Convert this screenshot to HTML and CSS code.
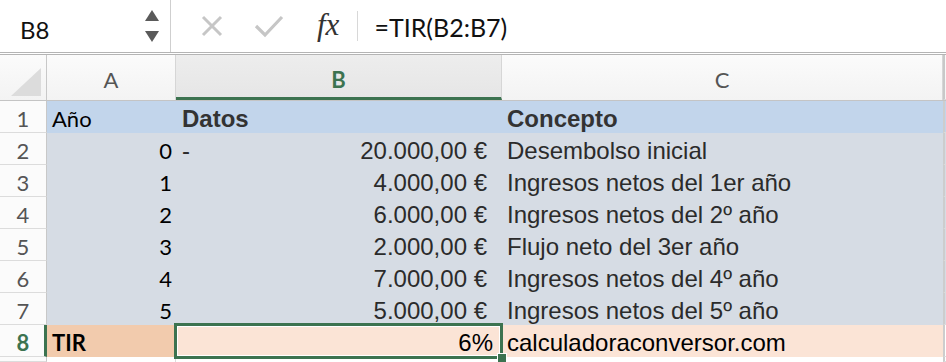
FILE: index.html
```html
<!DOCTYPE html>
<html lang="es">
<head>
    <meta charset="UTF-8">
    <title>TIR - Hoja de cálculo</title>
    <link rel="stylesheet" href="styles.css">
</head>
<body>
    <div class="formula-bar">
        <div class="name-box">
            <span class="cell-ref">B8</span>
            <div class="spinner">
                <span class="arrow up"></span>
                <span class="arrow down"></span>
            </div>
        </div>
        <div class="tools">
            <svg class="icon" width="24" height="24" viewBox="0 0 24 24">
                <path d="M3 3 L21 21 M21 3 L3 21" stroke="#c6c6c6" stroke-width="3" fill="none"/>
            </svg>
            <svg class="icon" width="30" height="24" viewBox="0 0 30 24">
                <path d="M2 12 L11 21 L28 3" stroke="#c6c6c6" stroke-width="3.2" fill="none"/>
            </svg>
            <span class="fx">fx</span>
            <span class="divider"></span>
        </div>
        <div class="formula">=TIR(B2:B7)</div>
    </div>

    <div class="sheet">
        <div class="row head">
            <div class="corner"><span class="tri"></span></div>
            <div class="col-head">A</div>
            <div class="col-head active">B</div>
            <div class="col-head">C</div>
            <div class="edge"></div>
        </div>

        <div class="row title">
            <div class="num">1</div>
            <div class="a">Año</div>
            <div class="b bold">Datos</div>
            <div class="c bold">Concepto</div>
            <div class="edge"></div>
        </div>
        <div class="row data">
            <div class="num">2</div>
            <div class="a right">0</div>
            <div class="b money"><span>-</span><span>20.000,00 €</span></div>
            <div class="c">Desembolso inicial</div>
            <div class="edge"></div>
        </div>
        <div class="row data">
            <div class="num">3</div>
            <div class="a right">1</div>
            <div class="b money"><span></span><span>4.000,00 €</span></div>
            <div class="c">Ingresos netos del 1er año</div>
            <div class="edge"></div>
        </div>
        <div class="row data">
            <div class="num">4</div>
            <div class="a right">2</div>
            <div class="b money"><span></span><span>6.000,00 €</span></div>
            <div class="c">Ingresos netos del 2º año</div>
            <div class="edge"></div>
        </div>
        <div class="row data">
            <div class="num">5</div>
            <div class="a right">3</div>
            <div class="b money"><span></span><span>2.000,00 €</span></div>
            <div class="c">Flujo neto del 3er año</div>
            <div class="edge"></div>
        </div>
        <div class="row data">
            <div class="num">6</div>
            <div class="a right">4</div>
            <div class="b money"><span></span><span>7.000,00 €</span></div>
            <div class="c">Ingresos netos del 4º año</div>
            <div class="edge"></div>
        </div>
        <div class="row data">
            <div class="num">7</div>
            <div class="a right">5</div>
            <div class="b money"><span></span><span>5.000,00 €</span></div>
            <div class="c">Ingresos netos del 5º año</div>
            <div class="edge"></div>
        </div>
        <div class="row result">
            <div class="num active">8</div>
            <div class="a tir">TIR</div>
            <div class="b selected">6%</div>
            <div class="c">calculadoraconversor.com</div>
            <div class="edge"></div>
        </div>
        <div class="row empty">
            <div class="num"></div>
            <div class="a"></div>
            <div class="b"></div>
            <div class="c"></div>
            <div class="edge"></div>
        </div>
    </div>
</body>
</html>
```

FILE: styles.css
```css
* {
    margin: 0;
    padding: 0;
    box-sizing: border-box;
}
body {
    width: 946px;
    height: 362px;
    overflow: hidden;
    background: #fff;
    font-family: 'Liberation Sans', Arial, sans-serif;
    color: #222;
}

/* formula bar */
.formula-bar {
    display: flex;
    align-items: center;
    height: 55px;
    border-bottom: 3px double #b4b4b4;
    background: #fff;
}
.name-box {
    width: 171px;
    height: 52px;
    border-right: 1px solid #cfcfcf;
    display: flex;
    align-items: center;
    justify-content: space-between;
    padding: 0 11px 0 20px;
}
.cell-ref {
    font-family: Lato, 'Open Sans', sans-serif;
    font-size: 24px;
    color: #111;
    padding-top: 6px;
}
.spinner {
    display: flex;
    flex-direction: column;
    gap: 10px;
}
.arrow {
    width: 0;
    height: 0;
    border-left: 7px solid transparent;
    border-right: 7px solid transparent;
}
.arrow.up {
    border-bottom: 11px solid #5a5a5a;
}
.arrow.down {
    border-top: 11px solid #5a5a5a;
}
.tools {
    display: flex;
    align-items: center;
    height: 52px;
    padding-left: 29px;
}
.tools .icon {
    margin-right: 30px;
}
.tools .icon + .icon {
    margin-right: 33px;
}
.fx {
    font-family: 'Liberation Serif', 'DejaVu Serif', serif;
    font-style: italic;
    font-size: 31px;
    color: #333;
    margin-top: -2px;
}
.divider {
    width: 1px;
    height: 30px;
    background: #d8d8d8;
    margin-left: 18px;
}
.formula {
    font-family: Lato, 'Open Sans', sans-serif;
    font-size: 25px;
    color: #111;
    padding-left: 16px;
    padding-top: 2px;
}

/* sheet grid */
.sheet {
    display: flex;
    flex-direction: column;
}
.row {
    display: grid;
    grid-template-columns: 47px 129px 326px 441px 1fr;
    height: 32px;
}
.row > div {
    display: flex;
    align-items: center;
    white-space: nowrap;
}
.row.head {
    height: 46px;
    background: linear-gradient(#fbfbfb, #f3f3f3);
    border-bottom: 1px solid #c4c4c4;
}
.corner {
    position: relative;
    border-right: 1px solid #c8c8c8;
}
.tri {
    position: absolute;
    right: 5px;
    bottom: 4px;
    width: 0;
    height: 0;
    border-left: 30px solid transparent;
    border-bottom: 28px solid #dcdcdc;
}
.col-head {
    justify-content: center;
    font-family: Lato, 'Open Sans', sans-serif;
    font-size: 22px;
    color: #555;
    border-right: 1px solid #d6d6d6;
    padding-top: 4px;
}
.col-head.active {
    background: linear-gradient(#ededed, #e6e6e6);
    color: #3c7350;
    font-weight: bold;
    border-bottom: 3px solid #3c7350;
    padding-top: 7px;
}
.row.head .edge {
    border-left: 2px solid #c8c8c8;
}

.num {
    justify-content: center;
    font-family: Lato, 'Open Sans', sans-serif;
    font-size: 22px;
    color: #555;
    background: #fbfbfb;
    border-right: 1px solid #c8c8c8;
    border-bottom: 1px solid #dcdcdc;
    padding-top: 3px;
}
.num.active {
    color: #3c7350;
    font-weight: bold;
    border-right: 3px solid #3c7350;
    padding-left: 2px;
}
.edge {
    border-left: 2px solid #cdcdcd;
    border-bottom: 1px solid #dcdcdc;
}

.a {
    font-family: Lato, 'Open Sans', sans-serif;
    font-size: 22px;
    color: #000;
    padding: 2px 4px 0 5px;
}
.a.right {
    justify-content: flex-end;
}
.a.tir {
    font-weight: bold;
}
.b, .c {
    font-size: 24px;
    color: #2b2b2b;
    padding-top: 3px;
}
.b {
    padding-left: 6px;
}
.c {
    padding-left: 5px;
}
.bold {
    font-weight: bold;
    color: #333;
}
.money {
    justify-content: space-between;
    padding-right: 15px;
}

.row.title {
    background: #c2d5eb;
}
.row.data {
    background: #d6dce4;
}
.row.result .a {
    background: #f2cbad;
}
.row.result .b,
.row.result .c {
    background: #fbe4d6;
    color: #000;
}
.row.empty {
    height: 5px;
}
.row.empty .a,
.row.empty .b {
    border-right: 1px solid #dcdcdc;
}

/* selected cell B8 */
.b.selected {
    position: relative;
    justify-content: flex-end;
    padding-right: 9px;
}
.b.selected::after {
    content: "";
    position: absolute;
    left: -2px;
    right: -1px;
    top: -2px;
    bottom: -2px;
    border: 3px solid #3c7350;
    box-shadow: inset 0 0 0 1px #fff;
}
.b.selected::before {
    content: "";
    position: absolute;
    right: -5px;
    bottom: -6px;
    width: 8px;
    height: 8px;
    background: #3c7350;
    border: 1px solid #fff;
    z-index: 1;
}
```
